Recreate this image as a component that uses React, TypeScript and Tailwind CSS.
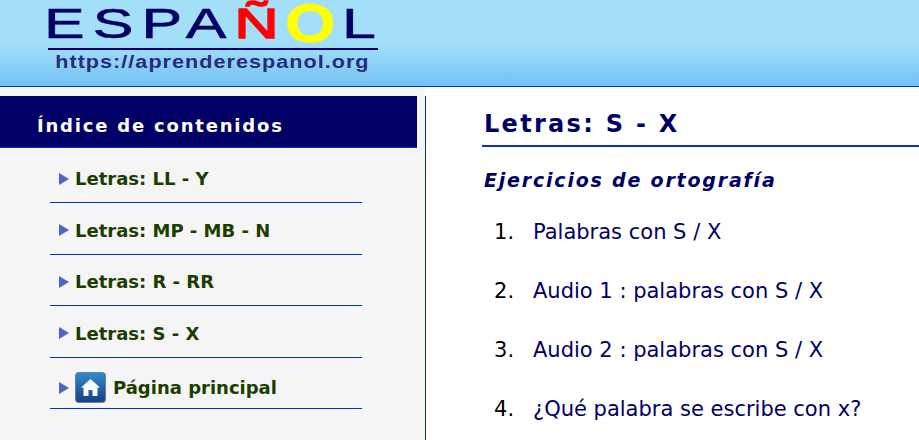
import React from 'react';

const menuItems = ['Letras: LL - Y', 'Letras: MP - MB - N', 'Letras: R - RR', 'Letras: S - X'];
const exercises = ['Palabras con S / X', 'Audio 1 : palabras con S / X', 'Audio 2 : palabras con S / X', '¿Qué palabra se escribe con x?'];

const Arrow = () => (
  <svg width="10" height="12" viewBox="0 0 10 12" className="shrink-0">
    <path d="M0 0L10 6L0 12Z" fill="#4f63cf" />
  </svg>
);

const HomeIcon = () => (
  <svg width="31" height="31" viewBox="0 0 31 31" className="shrink-0">
    <defs>
      <linearGradient id="homeBg" x1="0" y1="0" x2="0" y2="1">
        <stop offset="0" stopColor="#3189cd" />
        <stop offset="1" stopColor="#173f86" />
      </linearGradient>
    </defs>
    <rect x="0.5" y="0.5" width="30" height="30" rx="3" fill="url(#homeBg)" stroke="#6b7f9e" />
    <path d="M15.5 7L25 15.5H22.5V24H17.5V18H13.5V24H8.5V15.5H6Z" fill="#ffffff" />
  </svg>
);

const Logo = () => (
  <div className="relative h-[72px] w-[330px] ml-[48px] font-['Liberation_Sans',sans-serif]">
    <div className="flex h-[47px] items-start pt-[1px] -ml-[4px] text-[42px] leading-[46px] text-[#000066] origin-left scale-x-[1.45] tracking-[5.6px] whitespace-nowrap [-webkit-text-stroke:0.6px_#000066]">
      <span>ESPA</span>
      <span className="text-[#ff0000] [-webkit-text-stroke:1.5px_#ff0000]">Ñ</span>
      <span className="inline-block text-[#ffff00] scale-y-[1.2] [-webkit-text-stroke:3px_#ffff00]">O</span>
      <span>L</span>
    </div>
    <div className="h-[2px] bg-[#000066] mt-[1px]" />
    <div className="mt-[2px] pl-[6px] text-[18px] leading-[20px] font-bold text-[#2a2a7a] origin-left scale-x-[1.2] tracking-[0.85px] whitespace-nowrap">https://aprenderespanol.org</div>
  </div>
);

export default function App() {
  return (
    <div className="h-screen overflow-hidden bg-white font-['DejaVu_Sans',sans-serif]">
      <header className="h-[87px] border-b border-[#0033cc] bg-gradient-to-b from-[#a4dff9] via-[#a4dff9] to-[#72c1f3] overflow-hidden">
        <Logo />
      </header>
      <div className="flex">
        <aside className="w-[425px] shrink-0 bg-[#f5f5f5] pt-[9px] h-[353px]">
          <div className="w-[417px] h-[52px] bg-[#000066] border-b border-[#0033cc] flex items-center pl-[37px] pt-[7px] text-[18px] font-bold text-white tracking-[1.8px]">
            Índice de contenidos
          </div>
          <ul className="ml-[50px] w-[312px] mt-[3.6px]">
            {menuItems.map((item) => (
              <li key={item} className="h-[51.5px] border-b border-[#0033cc] flex items-center gap-[6px] pl-[9px] pt-[4px] text-[18px] font-bold text-[#1a3d00]">
                <Arrow />
                <span>{item}</span>
              </li>
            ))}
            <li className="h-[51.5px] border-b border-[#0033cc] flex items-center gap-[6px] pl-[9px] pt-[10px] text-[18px] font-bold text-[#1a3d00]">
              <Arrow />
              <HomeIcon />
              <span className="ml-[1px]">Página principal</span>
            </li>
          </ul>
        </aside>
        <main className="flex-1 border-l border-[#0033cc] mt-[9px] pl-[56px]">
          <h1 className="h-[51px] border-b-2 border-[#0033cc] pl-[2px] pt-[10px] text-[24px] leading-[36px] font-bold text-[#000066] tracking-[2.3px]">
            Letras: S - X
          </h1>
          <h3 className="mt-[20px] pl-[2px] text-[19px] leading-[26px] font-bold italic text-[#000066] tracking-[1.8px]">
            Ejercicios de ortografía
          </h3>
          <ol className="mt-[24px] text-[21px] leading-[30px] text-black">
            {exercises.map((ex, i) => (
              <li key={ex} className="mb-[29px] flex">
                <span className="ml-[12px] w-[39px] shrink-0">{i + 1}.</span>
                <span className="text-[#000066] whitespace-nowrap">{ex}</span>
              </li>
            ))}
          </ol>
        </main>
      </div>
    </div>
  );
}
